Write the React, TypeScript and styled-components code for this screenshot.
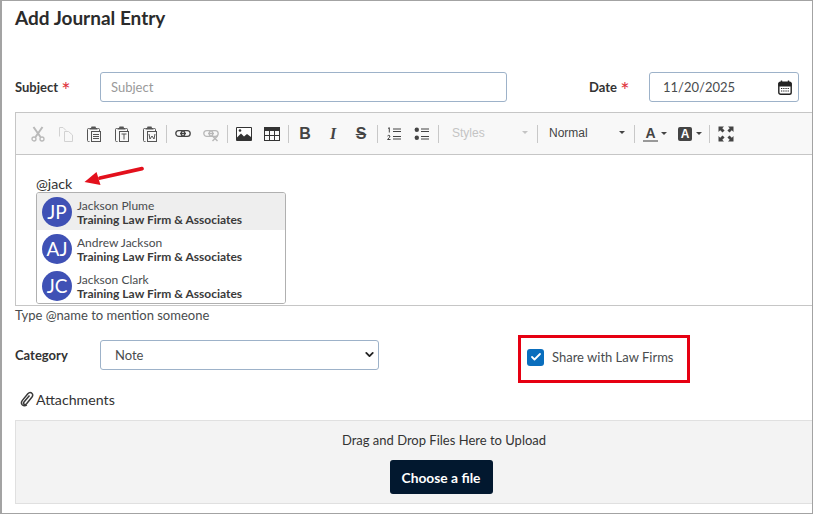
import styled, {createGlobalStyle} from 'styled-components';
import {ChevronDown, Check} from 'lucide-react';

const GlobalStyle = createGlobalStyle`
    html, body {
        margin: 0;
        padding: 0;
        background: #fff;
    }
    * {
        box-sizing: border-box;
    }
`;

const mentions = [
    {initials: 'JP', name: 'Jackson Plume', active: true},
    {initials: 'AJ', name: 'Andrew Jackson', active: false},
    {initials: 'JC', name: 'Jackson Clark', active: false},
];


const CutIcon = () => <svg width="16" height="16" viewBox="0 0 16 16" fill="none" stroke="#b9b9b9">
    <path d="M3.5 1 L10.5 11 M12.5 1 L5.5 11" strokeWidth="2"/>
    <circle cx="4" cy="13" r="2" strokeWidth="1.3"/>
    <circle cx="12" cy="13" r="2" strokeWidth="1.3"/>
</svg>;

const CopyIcon = () => <svg width="16" height="16" viewBox="0 0 16 16" fill="none" stroke="#d2d2d2">
    <path d="M1.5 10.5 V1.5 H5 L8 4.5"/>
    <path d="M6.5 5.5 H10.5 L14.5 9 V15.5 H6.5 Z"/>
</svg>;

const PasteIcon = ({children}: {children: React.ReactNode}) => <svg width="16" height="16" viewBox="0 0 16 16" fill="none" stroke="#555">
    <path d="M3.5 15.5 H2.5 Q1.5 15.5 1.5 14.5 V3.5 Q1.5 2.5 2.5 2.5 H3.5 M11.5 2.5 H12.5 Q13.5 2.5 13.5 3.5 V5"/>
    <path d="M3.5 3.5 V2 H5 L5.5 .5 H9.5 L10 2 H11.5 V3.5 Z" fill="#555" stroke="none"/>
    <rect x="5.5" y="5.5" width="9" height="10"/>
    {children}
</svg>;

const LinkIcon = ({color, cross}: {color: string; cross?: boolean}) => <svg width="16" height="16" viewBox="0 0 16 16" fill="none" stroke={color} strokeWidth="1.3">
    <rect x=".8" y="4.6" width="9" height="5.8" rx="2.9"/>
    <rect x="6.2" y="4.6" width="9" height="5.8" rx="2.9"/>
    <path d="M5 7.5 H11"/>
    {cross && <path d="M9.5 10 L14.5 15 M14.5 10 L9.5 15" strokeWidth="1.5"/>}
</svg>;

const ImageIcon = () => <svg width="16" height="16" viewBox="0 0 16 16">
    <path d="M.5 1.5 H15.5 V14.5 H.5 Z" fill="#fff" stroke="#333"/>
    <path d="M1 14 V11.5 L5 7.5 L8 10.5 L11 8 L15 11 V14 Z" fill="#333"/>
    <circle cx="4" cy="4.5" r="1.3" fill="#333"/>
</svg>;

const TableIcon = () => <svg width="16" height="16" viewBox="0 0 16 16" fill="none" stroke="#333">
    <rect x=".5" y="1.5" width="15" height="13"/>
    <rect x="0" y="1" width="16" height="4" fill="#333" stroke="none"/>
    <path d="M.5 9.5 H15.5 M5.5 5 V14.5 M10.5 5 V14.5"/>
</svg>;

const NumberedIcon = () => <svg width="16" height="16" viewBox="0 0 16 16" fill="none" stroke="#444">
    <path d="M2 2.5 L3.3 1.7 V6.5" strokeWidth="1"/>
    <path d="M1.5 10 Q2.8 8.6 4 10 Q4 11.2 1.5 13.5 H4.5" strokeWidth="1"/>
    <path d="M7 3 H15 M7 5.5 H15 M7 10.5 H15 M7 13 H15" strokeWidth="1.1"/>
</svg>;

const BulletIcon = () => <svg width="16" height="16" viewBox="0 0 16 16" fill="none" stroke="#444">
    <circle cx="2.8" cy="3.8" r="2.2" fill="#444" stroke="none"/>
    <circle cx="2.8" cy="11.8" r="2.2" fill="#444" stroke="none"/>
    <path d="M7 3 H15 M7 5.5 H15 M7 10.5 H15 M7 13 H15" strokeWidth="1.1"/>
</svg>;

const MaximizeIcon = () => <svg width="16" height="16" viewBox="0 0 16 16" fill="#444">
    <path d="M.5 .5 H6 L4.3 2.2 L6.6 4.5 L4.5 6.6 L2.2 4.3 L.5 6 Z"/>
    <path d="M15.5 .5 H10 L11.7 2.2 L9.4 4.5 L11.5 6.6 L13.8 4.3 L15.5 6 Z"/>
    <path d="M.5 15.5 H6 L4.3 13.8 L6.6 11.5 L4.5 9.4 L2.2 11.7 L.5 10 Z"/>
    <path d="M15.5 15.5 H10 L11.7 13.8 L9.4 11.5 L11.5 9.4 L13.8 11.7 L15.5 10 Z"/>
</svg>;

const CalendarIcon = () => <svg width="14" height="15" viewBox="0 0 14 15" fill="none" stroke="#222">
    <rect x=".8" y="2.2" width="12.4" height="12" rx="1.8" strokeWidth="1.4"/>
    <path d="M1 3 H13 V6 H1 Z" fill="#222"/>
    <path d="M3.5 .5 V3 M10.5 .5 V3" strokeWidth="1.4"/>
    <path d="M3 8.5 H11 M3 11 H11" strokeWidth="1.2" strokeDasharray="1.3 .9"/>
</svg>;

const PaperclipIcon = () => <svg width="14" height="16" viewBox="0 0 14 16" fill="none" stroke="#3a3a3a" strokeWidth="1.5">
    <path d="M9.5 4.5 L4 11 Q3 12.6 4.2 13.4 Q5.4 14 6.6 12.8 L12 6 Q13.6 3.6 11.6 2 Q9.6 .8 7.8 2.8 L2.4 9.4 Q.4 12.2 2.4 14 Q4.6 15.6 6.8 13.8"/>
</svg>;

const RedArrow = () => <svg width="64" height="22" viewBox="0 0 64 22">
    <path d="M59 2.6 L17 12" stroke="#e3101c" strokeWidth="3.8" strokeLinecap="round"/>
    <path d="M1.5 16 L13.5 6 L17.5 19 Z" fill="#e3101c"/>
</svg>;


const App = () => {
    return <Frame>
        <GlobalStyle/>
        <Title>Add Journal Entry</Title>

        <TopRow>
            <FieldLabel>Subject <Required>*</Required></FieldLabel>
            <SubjectInput placeholder="Subject"/>
            <DateLabel>Date <Required>*</Required></DateLabel>
            <DateField>
                <DateValue>11/20/2025</DateValue>
                <CalendarIcon/>
            </DateField>
        </TopRow>

        <Editor>
            <Toolbar>
                <ToolButton><CutIcon/></ToolButton>
                <ToolButton><CopyIcon/></ToolButton>
                <ToolButton><PasteIcon><path d="M7 8.5 H13 M7 10.5 H13 M7 12.5 H13"/></PasteIcon></ToolButton>
                <ToolButton><PasteIcon><path d="M7.5 8 H12.5 M10 8 V13.5"/></PasteIcon></ToolButton>
                <ToolButton><PasteIcon><path d="M7 8 L8 13 L10 10 L12 13 L13 8"/></PasteIcon></ToolButton>
                <Separator/>
                <ToolButton><LinkIcon color="#444"/></ToolButton>
                <ToolButton><LinkIcon color="#b9b9b9" cross/></ToolButton>
                <Separator/>
                <ToolButton><ImageIcon/></ToolButton>
                <ToolButton><TableIcon/></ToolButton>
                <Separator/>
                <ToolButton><BoldGlyph>B</BoldGlyph></ToolButton>
                <ToolButton><ItalicGlyph>I</ItalicGlyph></ToolButton>
                <ToolButton><StrikeGlyph>S</StrikeGlyph></ToolButton>
                <Separator/>
                <ToolButton><NumberedIcon/></ToolButton>
                <ToolButton><BulletIcon/></ToolButton>
                <Separator/>
                <StylesCombo>Styles<Caret $disabled/></StylesCombo>
                <Separator/>
                <NormalCombo>Normal<Caret/></NormalCombo>
                <Separator/>
                <TextColorButton><TextColorGlyph>A</TextColorGlyph><Caret/></TextColorButton>
                <BackColorButton><BackColorGlyph>A</BackColorGlyph><Caret/></BackColorButton>
                <Separator/>
                <ToolButton><MaximizeIcon/></ToolButton>
            </Toolbar>
            <EditorBody>
                <MentionText>
                    @jack
                    <ArrowMark><RedArrow/></ArrowMark>
                </MentionText>
                <MentionList>
                    {mentions.map(row => <MentionRow key={row.initials} $active={row.active}>
                        <Avatar>{row.initials}</Avatar>
                        <MentionInfo>
                            <MentionName>{row.name}</MentionName>
                            <MentionFirm>Training Law Firm &amp; Associates</MentionFirm>
                        </MentionInfo>
                    </MentionRow>)}
                </MentionList>
            </EditorBody>
        </Editor>
        <Hint>Type @name to mention someone</Hint>

        <CategoryRow>
            <FieldLabel>Category</FieldLabel>
            <SelectWrap>
                <CategorySelect defaultValue="Note">
                    <option>Note</option>
                </CategorySelect>
                <SelectCaret><ChevronDown size={13} strokeWidth={3.4} color="#222"/></SelectCaret>
            </SelectWrap>
            <ShareField>
                <CheckBox><Check size={12} strokeWidth={3.6} color="#fff"/></CheckBox>
                Share with Law Firms
                <Highlight/>
            </ShareField>
        </CategoryRow>

        <AttachmentsTitle><PaperclipIcon/>Attachments</AttachmentsTitle>
        <DropZone>
            <DropText>Drag and Drop Files Here to Upload</DropText>
            <ChooseButton type="button">Choose a file</ChooseButton>
        </DropZone>
    </Frame>;
};

export default App;


const Frame = styled.div`
    width: 813px;
    height: 514px;
    border: 1px solid #a3a3a3;
    border-left-width: 2px;
    padding-left: 13px;
    font-family: Lato, "Open Sans", sans-serif;
    color: #494c4e;
    background: #fff;
    overflow: hidden;
`;

const Title = styled.h1`
    margin: 0;
    height: 71px;
    padding-top: 5px;
    font-size: 19px;
    line-height: 24px;
    font-weight: 700;
    color: #2b2b2b;
`;

const TopRow = styled.div`
    display: flex;
    align-items: center;
    height: 30px;
    padding-right: 13px;
`;

const FieldLabel = styled.label`
    width: 85px;
    flex: none;
    font-size: 13px;
    font-weight: 700;
    color: #333;
`;

const DateLabel = styled(FieldLabel)`
    width: 60px;
    margin-left: auto;
`;

const Required = styled.span`
    color: #e0333c;
    font-size: 22px;
    font-weight: 400;
    line-height: 10px;
    vertical-align: -6px;
`;

const inputBorder = '#9db2c9';

const SubjectInput = styled.input`
    width: 407px;
    height: 30px;
    padding: 0 10px;
    border: 1px solid ${inputBorder};
    border-radius: 3px;
    font-family: inherit;
    font-size: 13px;
    outline: none;

    &::placeholder {
        color: #9a9a9a;
        opacity: 1;
    }
`;

const DateField = styled.div`
    display: flex;
    align-items: center;
    justify-content: space-between;
    width: 150px;
    height: 30px;
    padding: 0 6px 0 13px;
    border: 1px solid ${inputBorder};
    border-radius: 3px;
`;

const DateValue = styled.span`
    font-size: 13px;
    color: #494c4e;
`;

const Editor = styled.div`
    margin-top: 10px;
    border-top: 1px solid #c6c6c6;
    border-left: 1px solid #c6c6c6;
    border-bottom: 1px solid #c6c6c6;
`;

const Toolbar = styled.div`
    display: flex;
    align-items: center;
    height: 42px;
    padding-left: 8px;
    background: #f8f8f8;
    border-bottom: 1px solid #c6c6c6;
`;

const ToolButton = styled.div`
    display: flex;
    align-items: center;
    justify-content: center;
    width: 28px;
    height: 24px;
    flex: none;
`;

const Separator = styled.div`
    width: 1px;
    height: 18px;
    margin: 0 2px;
    flex: none;
    background: #c8c8c8;
`;

const glyph = `
    font-size: 16px;
    line-height: 16px;
    color: #444;
`;

const BoldGlyph = styled.span`
    ${glyph}
    font-family: "Liberation Sans", sans-serif;
    font-weight: 700;
`;

const ItalicGlyph = styled.span`
    ${glyph}
    font-family: "Liberation Serif", serif;
    font-weight: 700;
    font-style: italic;
`;

const StrikeGlyph = styled.span`
    ${glyph}
    font-family: "Liberation Sans", sans-serif;
    font-weight: 700;
    text-decoration: line-through;
`;

const Combo = styled.div`
    display: flex;
    align-items: center;
    justify-content: space-between;
    margin-top: -2px;
    padding-right: 7px;
    flex: none;
    font-family: "Liberation Sans", sans-serif;
    font-size: 12px;
`;

const StylesCombo = styled(Combo)`
    width: 94px;
    padding-left: 11px;
    color: #c4c4c4;
`;

const NormalCombo = styled(Combo)`
    width: 92px;
    padding-left: 9px;
    color: #444;
`;

const Caret = styled.span<{$disabled?: boolean}>`
    width: 0;
    height: 0;
    border-left: 3px solid transparent;
    border-right: 3px solid transparent;
    border-top: 3px solid ${p => p.$disabled ? '#c4c4c4' : '#444'};
`;

const TextColorButton = styled.div`
    display: flex;
    align-items: center;
    gap: 3px;
    width: 36px;
    flex: none;
    padding-left: 6px;
`;

const BackColorButton = styled.div`
    display: flex;
    align-items: center;
    gap: 4px;
    width: 34px;
    flex: none;
    padding-left: 5px;
`;

const TextColorGlyph = styled.span`
    width: 15px;
    height: 16px;
    font-family: "Liberation Sans", sans-serif;
    font-size: 14px;
    line-height: 14px;
    font-weight: 700;
    text-align: center;
    color: #444;
    border-bottom: 2px solid #999;
`;

const BackColorGlyph = styled.span`
    width: 14px;
    height: 14px;
    border-radius: 2px;
    background: #444;
    font-family: "Liberation Sans", sans-serif;
    font-size: 12px;
    line-height: 14px;
    font-weight: 700;
    text-align: center;
    color: #fff;
`;

const EditorBody = styled.div`
    height: 150px;
    padding: 20px 0 0 20px;
`;

const MentionText = styled.div`
    position: relative;
    height: 17px;
    font-size: 14.2px;
    line-height: 17px;
    color: #333;
`;

const ArrowMark = styled.span`
    position: absolute;
    left: 47px;
    top: -9px;
    line-height: 0;
`;

const MentionList = styled.div`
    width: 250px;
    height: 112px;
    border: 1px solid #b0b0b0;
    border-radius: 3px;
    overflow: hidden;
    background: #fff;
`;

const MentionRow = styled.div<{$active: boolean}>`
    display: flex;
    align-items: center;
    gap: 5px;
    height: 37px;
    padding-left: 5px;
    background: ${p => p.$active ? '#eeeeee' : '#fff'};
`;

const Avatar = styled.div`
    display: flex;
    align-items: center;
    justify-content: center;
    width: 30px;
    height: 30px;
    flex: none;
    border-radius: 50%;
    background: #3f51b5;
    color: #fff;
    font-size: 19px;
`;

const MentionInfo = styled.div`
    display: flex;
    flex-direction: column;
    padding-top: 2px;
`;

const MentionName = styled.span`
    font-size: 12px;
    line-height: 14px;
    color: #494c4e;
`;

const MentionFirm = styled.span`
    font-size: 12px;
    line-height: 14px;
    font-weight: 700;
    color: #3a3a3a;
`;

const Hint = styled.div`
    height: 17px;
    margin-top: 1px;
    font-size: 13px;
    line-height: 17px;
    color: #494c4e;
`;

const CategoryRow = styled.div`
    display: flex;
    align-items: center;
    height: 30px;
    margin-top: 16px;
`;

const SelectWrap = styled.div`
    position: relative;
    width: 279px;
    height: 30px;
`;

const CategorySelect = styled.select`
    appearance: none;
    width: 100%;
    height: 100%;
    padding: 0 14px;
    border: 1px solid ${inputBorder};
    border-radius: 3px;
    background: #fff;
    font-family: inherit;
    font-size: 13px;
    color: #494c4e;
    outline: none;
`;

const SelectCaret = styled.span`
    position: absolute;
    right: 3px;
    top: 8px;
    line-height: 0;
    pointer-events: none;
`;

const ShareField = styled.div`
    position: relative;
    display: flex;
    align-items: center;
    gap: 8px;
    margin: 4px 0 0 148px;
    font-size: 13px;
    color: #494c4e;
`;

const CheckBox = styled.span`
    display: flex;
    align-items: center;
    justify-content: center;
    width: 17px;
    height: 17px;
    border-radius: 3px;
    background: #0a6ebd;
`;

const Highlight = styled.span`
    position: absolute;
    left: -9px;
    top: -14px;
    width: 172px;
    height: 48px;
    border: 3px solid #e60012;
    pointer-events: none;
`;

const AttachmentsTitle = styled.div`
    display: flex;
    align-items: center;
    gap: 2px;
    height: 20px;
    margin-top: 19px;
    padding-left: 5px;
    font-size: 14.2px;
    color: #333;
`;

const DropZone = styled.div`
    display: flex;
    flex-direction: column;
    align-items: center;
    height: 84px;
    margin-top: 11px;
    padding: 11px 0 0 60px;
    background: #f3f3f3;
    border-top: 1px solid #e0e0e0;
    border-bottom: 1px solid #e0e0e0;
    border-left: 1px solid #e0e0e0;
`;

const DropText = styled.div`
    height: 16px;
    font-size: 13px;
    line-height: 16px;
    color: #333;
`;

const ChooseButton = styled.button`
    width: 103px;
    height: 34px;
    margin: 12px 6px 0 0;
    border: none;
    border-radius: 3px;
    background: #02182f;
    color: #fff;
    font-family: inherit;
    font-size: 13.8px;
    font-weight: 700;
`;
